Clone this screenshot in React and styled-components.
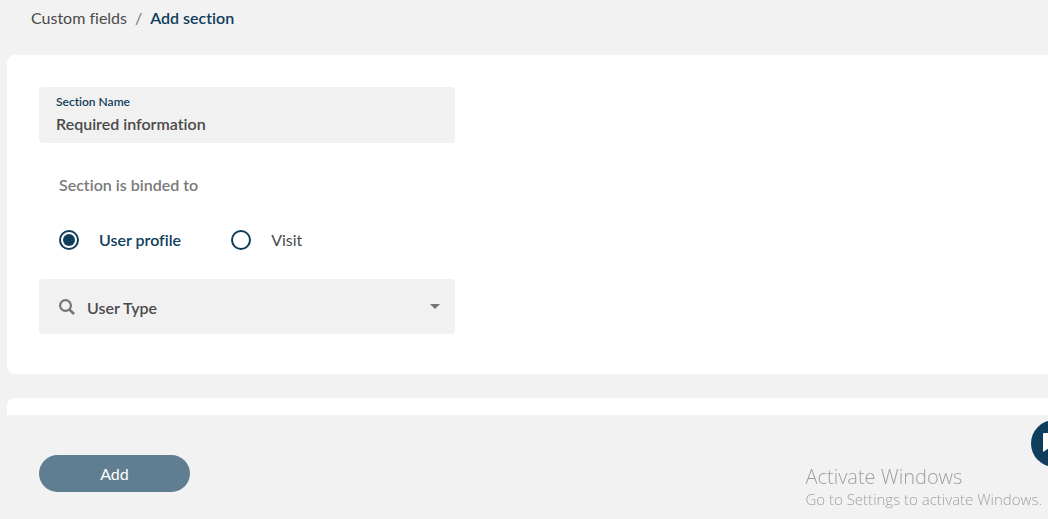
import React from "react";
import styled, { createGlobalStyle } from "styled-components";

const GlobalStyle = createGlobalStyle`
  * {
    box-sizing: border-box;
  }

  body {
    margin: 0;
    background: #f2f2f2;
    color: #4a4a4a;
    font-family: Lato, "Liberation Sans", sans-serif;
    font-size: 16px;
    font-variant-ligatures: none;
  }
`;

const Page = styled.div`
  display: flex;
  flex-direction: column;
  min-height: 100vh;
  padding-left: 7px;
`;

const Breadcrumb = styled.nav`
  display: flex;
  gap: 8px;
  padding: 8px 24px 27px;
  line-height: 20px;
`;

const Crumb = styled.a`
  color: #4a4a4a;
  text-decoration: none;
`;

const Separator = styled.span`
  color: #6c757d;
`;

const CurrentCrumb = styled.span`
  color: #0f3d5c;
  font-weight: 600;
`;

const Card = styled.section`
  padding: 32px 32px 40px;
  background: #fff;
  border-radius: 8px 0 0 8px;
`;

const NextCard = styled.section`
  height: 17px;
  margin-top: 24px;
  background: #fff;
  border-radius: 8px 0 0 0;
`;

const TextField = styled.div`
  display: flex;
  flex-direction: column;
  max-width: 416px;
  height: 56px;
  padding: 7px 17px;
  background: #f1f1f1;
  border-radius: 4px;
`;

const FieldLabel = styled.label`
  color: #0f3d5c;
  font-size: 12px;
  font-weight: 600;
  line-height: 16px;
`;

const Input = styled.input`
  width: 100%;
  height: 28px;
  padding: 0;
  border: 0;
  outline: 0;
  background: transparent;
  color: #4a4a4a;
  font: inherit;
  font-weight: 600;
`;

const RadioGroup = styled.fieldset`
  display: flex;
  gap: 50px;
  margin: 0;
  padding: 33px 20px 27px;
  border: 0;
`;

const Legend = styled.legend`
  padding: 32px 0 0;
  color: #7a7a7a;
  font-weight: 600;
  line-height: 20px;
`;

const RadioLabel = styled.label`
  display: flex;
  align-items: center;
  gap: 20px;
  color: ${props => (props.$checked ? "#0f3d5c" : "#4a4a4a")};
  font-weight: ${props => (props.$checked ? 600 : 400)};
  line-height: 24px;
`;

const Radio = styled.input`
  appearance: none;
  width: 20px;
  height: 20px;
  margin: 0;
  border: 2px solid #0f3d5c;
  border-radius: 50%;
  background: #fff;

  &:checked {
    padding: 2px;
    background: #0f3d5c content-box;
  }
`;

const SelectField = styled.div`
  display: grid;
  grid-template-columns: 48px 1fr 40px;
  align-items: center;
  max-width: 416px;
  height: 55px;
  background: #f1f1f1;
  border-radius: 4px;
`;

const Select = styled.select`
  grid-area: 1 / 1 / 2 / 4;
  appearance: none;
  width: 100%;
  height: 100%;
  padding: 2px 40px 0 48px;
  border: 0;
  outline: 0;
  background: transparent;
  color: #4a4a4a;
  font: inherit;
  font-weight: 600;
`;

const SearchIcon = styled.svg`
  grid-area: 1 / 1;
  justify-self: center;
  width: 16px;
  height: 16px;
  margin-left: 8px;
  pointer-events: none;
`;

const Caret = styled.svg`
  grid-area: 1 / 3;
  justify-self: center;
  width: 10px;
  height: 5px;
  pointer-events: none;
`;

const Footer = styled.footer`
  flex: 1;
  padding: 40px 32px 27px;
`;

const AddButton = styled.button`
  width: 151px;
  height: 37px;
  padding: 0;
  border: 0;
  border-radius: 19px;
  background: #5f7e92;
  color: #fff;
  font: inherit;
  cursor: pointer;
`;

const ChatButton = styled.button`
  position: fixed;
  right: -30px;
  bottom: 52px;
  display: flex;
  align-items: center;
  justify-content: center;
  width: 47px;
  height: 47px;
  padding: 0;
  border: 0;
  border-radius: 50%;
  background: #0f3d5c;
`;

const Watermark = styled.aside`
  position: fixed;
  right: 6px;
  bottom: 10px;
  color: #a0a0a0;
  font-family: "Open Sans", "Noto Sans", sans-serif;
  font-weight: 300;
  pointer-events: none;
`;

const WatermarkTitle = styled.div`
  font-size: 20px;
  line-height: 24px;
`;

const WatermarkText = styled.div`
  font-size: 15px;
  line-height: 20px;
`;

class App extends React.Component {
  constructor(props) {
    super(props);

    this.state = {
      name: "Required information",
      target: "profile"
    };
  }

  handleNameChange = e => {
    this.setState({ name: e.target.value });
  };

  handleTargetChange = e => {
    this.setState({ target: e.target.value });
  };

  renderRadio(value, text) {
    const checked = this.state.target === value;

    return (
      <RadioLabel $checked={checked}>
        <Radio
          type="radio"
          name="target"
          value={value}
          checked={checked}
          onChange={this.handleTargetChange}
        />
        {text}
      </RadioLabel>
    );
  }

  render() {
    return (
      <>
        <GlobalStyle />
        <Page>
          <Breadcrumb aria-label="Breadcrumb">
            <Crumb href="#">Custom fields</Crumb>
            <Separator>/</Separator>
            <CurrentCrumb>Add section</CurrentCrumb>
          </Breadcrumb>
          <Card>
            <TextField>
              <FieldLabel htmlFor="section-name">Section Name</FieldLabel>
              <Input
                id="section-name"
                type="text"
                value={this.state.name}
                onChange={this.handleNameChange}
              />
            </TextField>
            <RadioGroup>
              <Legend>Section is binded to</Legend>
              {this.renderRadio("profile", "User profile")}
              {this.renderRadio("visit", "Visit")}
            </RadioGroup>
            <SelectField>
              <Select aria-label="User Type" defaultValue="">
                <option value="">User Type</option>
              </Select>
              <SearchIcon viewBox="0 0 16 16" fill="none" stroke="#757575" aria-hidden="true">
                <circle cx="6.5" cy="6.5" r="5.4" strokeWidth="2.2" />
                <path d="M10.3 10.3L15 15" strokeWidth="2.6" />
              </SearchIcon>
              <Caret viewBox="0 0 10 5" aria-hidden="true">
                <path d="M0 0H10L5 5Z" fill="#757575" />
              </Caret>
            </SelectField>
          </Card>
          <NextCard />
          <Footer>
            <AddButton type="button">Add</AddButton>
          </Footer>
        </Page>
        <ChatButton type="button" aria-label="Chat">
          <svg width="23" height="23" viewBox="0 0 23 23" aria-hidden="true">
            <path d="M1 1H22V16H6L0 20V2Q0 1 1 1Z" fill="#fff" />
          </svg>
        </ChatButton>
        <Watermark>
          <WatermarkTitle>Activate Windows</WatermarkTitle>
          <WatermarkText>Go to Settings to activate Windows.</WatermarkText>
        </Watermark>
      </>
    );
  }
}

export default App;
